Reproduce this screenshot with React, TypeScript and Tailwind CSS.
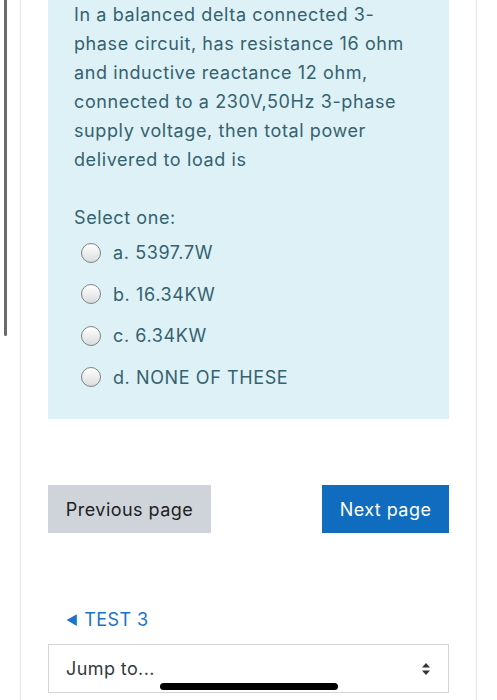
const OPTIONS = ['a. 5397.7W', 'b. 16.34KW', 'c. 6.34KW', 'd. NONE OF THESE']

const QUESTION_LINES = [
  'In a balanced delta connected 3-',
  'phase circuit, has resistance 16 ohm',
  'and inductive reactance 12 ohm,',
  'connected to a 230V,50Hz 3-phase',
  'supply voltage, then total power',
  'delivered to load is',
]

function Radio() {
  return (
    <span className="inline-block size-[20px] shrink-0 rounded-full border-[1.5px] border-[#7d8285] bg-gradient-to-b from-white to-[#d9dcde]" />
  )
}

function SortArrows() {
  return (
    <svg width="10" height="14" viewBox="0 0 10 14" className="text-[#333]">
      <path d="M5 1 L9 5.5 H1 Z" fill="currentColor" />
      <path d="M5 13 L9 8.5 H1 Z" fill="currentColor" />
    </svg>
  )
}

export default function App() {
  return (
    <div
      className="relative flex h-[700px] w-[497px] overflow-hidden bg-white"
      style={{ fontFamily: 'Inter, "Liberation Sans", sans-serif' }}
    >
      {/* Left gutter with overlay scrollbar */}
      <div className="w-[20px] shrink-0">
        <div className="ml-[4px] h-[336px] w-[3px] rounded-b-sm bg-[#6b6b6b]" />
      </div>

      {/* Main column */}
      <div className="flex w-[457px] shrink-0 flex-col border-x border-[#e6e6e6] px-[27px]">
        {/* Question box */}
        <div className="bg-[#def1f7] px-[26px] pb-[21px] text-[18px] leading-[29px] tracking-[0.6px] text-[#35626e]">
          <div>
            {QUESTION_LINES.map(l => (
              <div key={l}>{l}</div>
            ))}
          </div>
          <div className="mt-[29px]">Select one:</div>
          <div>
            {OPTIONS.map(o => (
              <div key={o} className="flex h-[41.5px] items-center gap-[12px] pl-[7px]">
                <Radio />
                <span>{o}</span>
              </div>
            ))}
          </div>
        </div>

        {/* Navigation buttons */}
        <div className="mt-[66px] flex justify-between text-[18px] tracking-[0.45px]">
          <button type="button" className="h-[48px] w-[163px] bg-[#ced4da] text-[#1d2125]">
            Previous page
          </button>
          <button type="button" className="h-[48px] w-[127px] bg-[#0f6cbf] text-white">
            Next page
          </button>
        </div>

        {/* Back link */}
        <div className="mt-[73px] flex items-center gap-[6px] pl-[18px] text-[18px] leading-[28px] tracking-[0.4px] text-[#1a73c4]">
          <span className="text-[13px]">◀</span>
          <span>TEST 3</span>
        </div>

        {/* Jump select */}
        <div className="mt-[10px] flex h-[49px] items-center justify-between border border-[#d4d4d4] px-[17px] text-[18px] tracking-[0.4px] text-[#343a40]">
          <span>Jump to...</span>
          <SortArrows />
        </div>
      </div>

      {/* Home indicator */}
      <div className="absolute left-[160px] top-[683px] h-[7px] w-[178px] rounded-full bg-black" />
    </div>
  )
}
